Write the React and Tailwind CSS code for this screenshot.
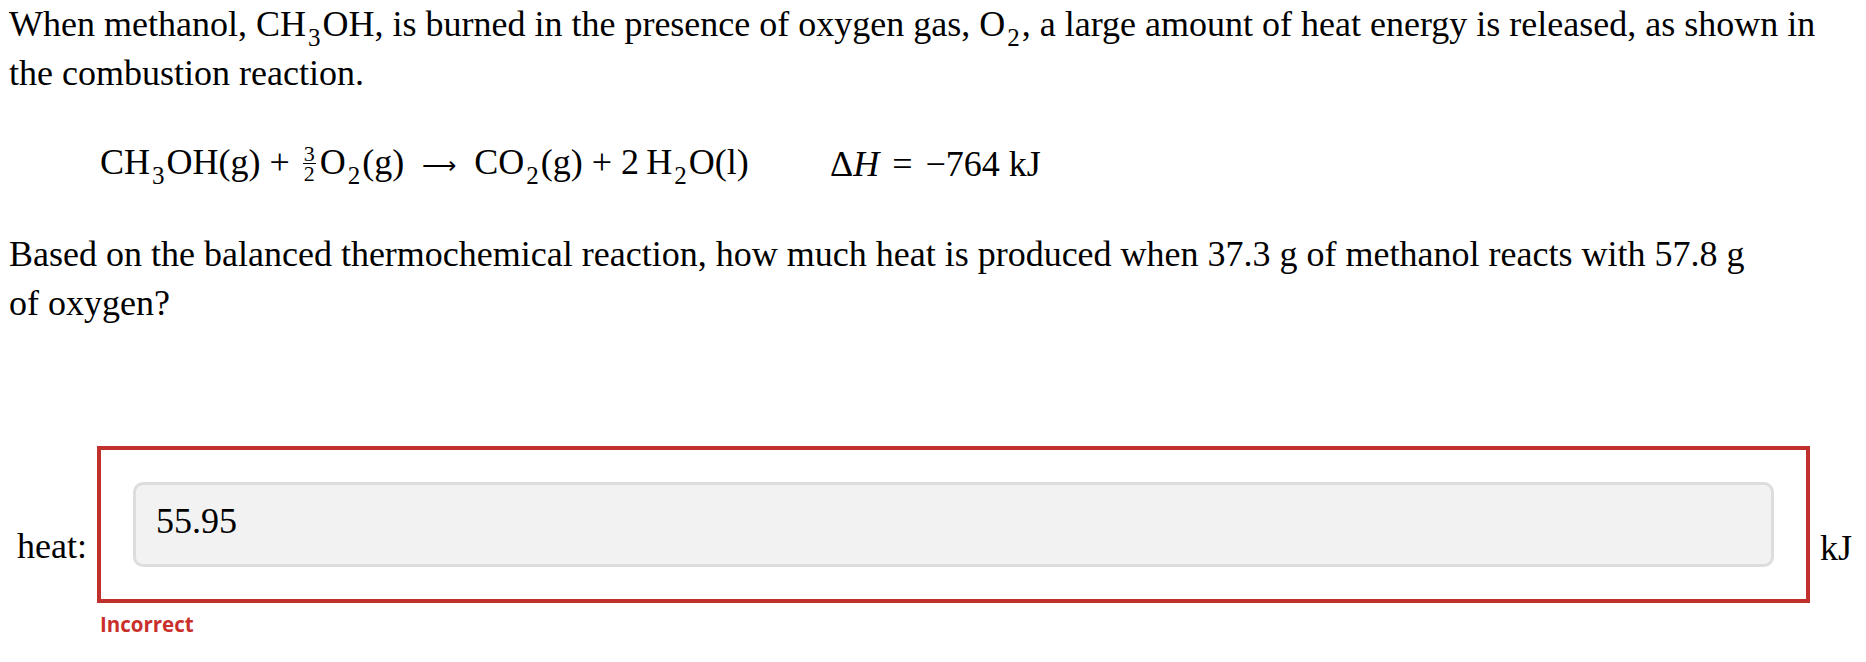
import React from 'react';

function Sub({ children }) {
  return <span className="relative top-[10px] mx-[2px] text-[25px] leading-none">{children}</span>;
}

function Frac({ num, den }) {
  return (
    <span className="relative top-[-2px] mx-[4px] inline-flex flex-col items-center align-middle text-[22px] leading-[19px]">
      <span>{num}</span>
      <span className="h-px w-[13px] bg-black" />
      <span>{den}</span>
    </span>
  );
}

export default function App() {
  return (
    <div className="h-[662px] w-[1866px] bg-white font-['Liberation_Serif',serif] text-[36px] text-black">
      <p className="whitespace-nowrap pl-[9px] leading-[49px]">
        When methanol, CH<Sub>3</Sub>OH, is burned in the presence of oxygen gas, O<Sub>2</Sub>, a large amount of heat energy is released, as shown in
        <br />
        the combustion reaction.
      </p>

      <div className="mt-[42px] flex h-[49px] items-center whitespace-nowrap pl-[100px] leading-[49px]">
        <div className="w-[730px]">
          CH<Sub>3</Sub>OH(g) + <Frac num="3" den="2" />O<Sub>2</Sub>(g)
          <span className="mx-[18px] text-[24px]">⟶</span>
          CO<Sub>2</Sub>(g) + 2&thinsp;H<Sub>2</Sub>O(l)
        </div>
        <div>
          Δ<i>H</i>{' '}<span className="mx-[4px]">=</span>{' '}−764 kJ
        </div>
      </div>

      <p className="mt-[41px] whitespace-nowrap pl-[9px] leading-[49px]">
        Based on the balanced thermochemical reaction, how much heat is produced when 37.3 g of methanol reacts with 57.8 g
        <br />
        of oxygen?
      </p>

      <div className="mt-[118px]">
        <div className="flex items-start">
          <label className="mt-[82px] w-[97px] pl-[17px] leading-[36px]">heat:</label>
          <div className="w-[1713px] border-4 border-[#c0302c] p-8">
            <div className="h-[85px] rounded-[10px] border-[3px] border-[#dddddd] bg-[#f2f2f2] pl-[20px] pt-[18px] leading-[36px]">
              55.95
            </div>
          </div>
          <span className="ml-[10px] mt-[84px] leading-[36px]">kJ</span>
        </div>
        <div className="mt-[11px] pl-[100px] font-['Open_Sans',sans-serif] text-[20.5px] font-bold leading-[21px] text-[#c9302c]">
          Incorrect
        </div>
      </div>
    </div>
  );
}
